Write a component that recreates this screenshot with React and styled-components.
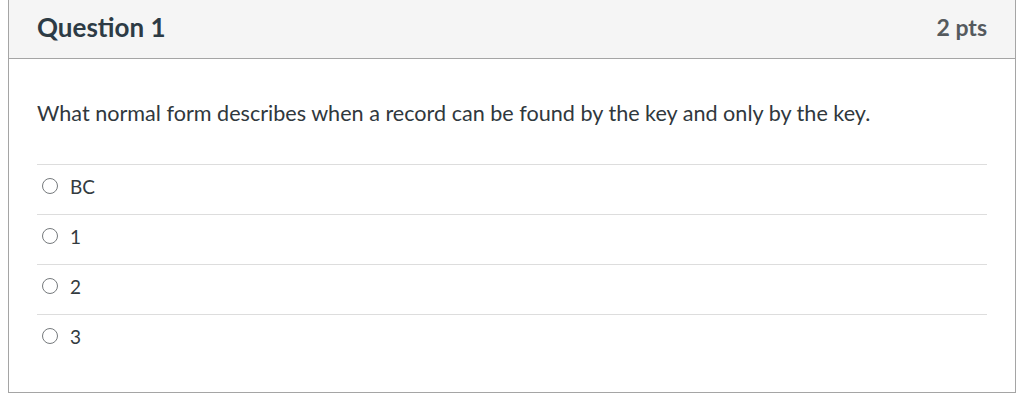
import React from "react";
import styled, { createGlobalStyle } from "styled-components";

const GlobalStyle = createGlobalStyle`
  html, body { margin: 0; padding: 0; background: #ffffff; }
  body { font-family: Lato, "Noto Sans", sans-serif; color: #2d3b45; }
`;

const Page = styled.div`
  padding: 0 17px 0 8px;
`;

const Card = styled.section`
  margin-top: -1px;
  border: 1px solid #a5a5a5;
  background: #ffffff;
`;

const Header = styled.header`
  display: flex;
  align-items: center;
  justify-content: space-between;
  height: 59px;
  padding: 0 28px 4px;
  background: #f5f5f5;
  border-bottom: 1px solid #a5a5a5;
  box-sizing: border-box;
`;

const Title = styled.h2`
  margin: 0;
  font-size: 26px;
  font-weight: 700;
  color: #2d3b45;
`;

const Points = styled.span`
  font-size: 23px;
  font-weight: 700;
  color: #555a5e;
`;

const Body = styled.div`
  padding: 40px 28px 28px;
`;

const Prompt = styled.p`
  margin: 0 0 37px;
  font-size: 21.6px;
  line-height: 28px;
  color: #30383d;
`;

const Answers = styled.ul`
  list-style: none;
  margin: 0;
  padding: 0;
`;

const Answer = styled.li`
  display: flex;
  align-items: center;
  gap: 12px;
  height: 50px;
  padding: 0 0 7px 5px;
  box-sizing: border-box;
  border-top: 1px solid #dddddd;
`;

const Radio = styled.span`
  width: 16px;
  height: 16px;
  border: 1.5px solid #767a7d;
  border-radius: 50%;
  box-sizing: border-box;
  flex: none;
`;

const Label = styled.span`
  font-size: 19px;
  color: #333b40;
`;

const answers = ["BC", "1", "2", "3"];

export default function App() {
  return (
    <>
      <GlobalStyle />
      <Page>
        <Card>
          <Header>
            <Title>Question 1</Title>
            <Points>2 pts</Points>
          </Header>
          <Body>
            <Prompt>
              What normal form describes when a record can be found by the key and only by the key.
            </Prompt>
            <Answers>
              {answers.map((a) => (
                <Answer key={a}>
                  <Radio />
                  <Label>{a}</Label>
                </Answer>
              ))}
            </Answers>
          </Body>
        </Card>
      </Page>
    </>
  );
}
